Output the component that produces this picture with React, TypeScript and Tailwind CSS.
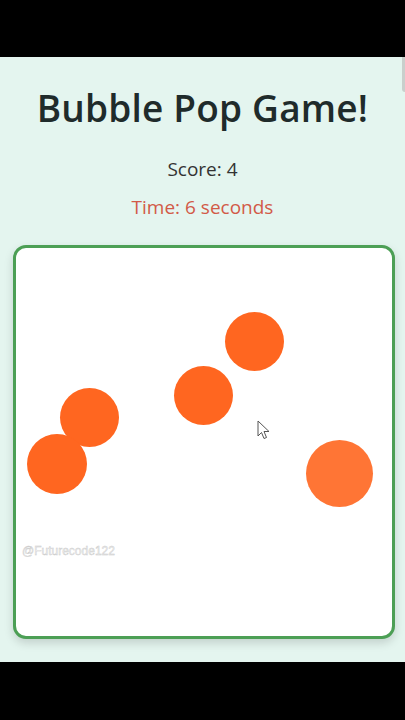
import React from 'react';

const bubbles = [
	{ id: 1, left: 209, top: 64, size: 59, color: 'bg-[#ff6620]' },
	{ id: 2, left: 158, top: 118, size: 59, color: 'bg-[#ff6620]' },
	{ id: 3, left: 44, top: 140, size: 59, color: 'bg-[#ff6620]' },
	{ id: 4, left: 11, top: 186, size: 60, color: 'bg-[#ff6620]' },
	{ id: 5, left: 290, top: 192, size: 67, color: 'bg-[#ff7535]' },
];

function Cursor() {
	return (
		<svg width="14" height="22" viewBox="0 0 14 22" className="absolute left-[241px] top-[172px]">
			<path
				d="M1 1 L1 16 L4.5 12.5 L7 18.5 L9.5 17.5 L7 11.5 L12 11.5 Z"
				fill="#fff"
				stroke="#555"
				strokeWidth="1"
				strokeLinejoin="round"
			/>
		</svg>
	);
}

export default function App() {
	return (
		<div className="w-[405px] h-[720px] flex flex-col bg-black font-['Open_Sans','Noto_Sans',sans-serif]">
			<div className="h-[57px] bg-black" />
			<div className="relative flex-1 bg-[#e4f5ef] flex flex-col items-center">
				{/* scrollbar stub */}
				<div className="absolute right-0 top-0 w-[3px] h-[35px] rounded-bl bg-[#c9cfcc]" />

				<h1 className="mt-[26px] text-[37px] leading-[50px] font-semibold text-[#1f2b2b] tracking-[0.2px]">
					Bubble Pop Game!
				</h1>
				<p className="mt-[23px] text-[19px] leading-[26px] text-[#333]">Score: 4</p>
				<p className="mt-[12px] text-[19px] leading-[26px] text-[#d25a47]">Time: 6 seconds</p>

				{/* Game Area */}
				<div className="relative mt-[25px] ml-[3px] w-[382px] h-[394px] bg-white border-[3px] border-[#4c9f55] rounded-[13px] shadow-[0_4px_10px_rgba(0,0,0,0.15)] overflow-hidden">
					{bubbles.map((b) => (
						<div
							key={b.id}
							className={`absolute rounded-full ${b.color}`}
							style={{ left: b.left, top: b.top, width: b.size, height: b.size }}
						/>
					))}
					<Cursor />
					<span className="absolute left-[6px] top-[294px] text-[12px] text-[#f2f2f2] [-webkit-text-stroke:0.4px_#c8c8c8] font-['Liberation_Sans',sans-serif]">
						@Futurecode122
					</span>
				</div>
			</div>
			<div className="h-[58px] bg-black" />
		</div>
	);
}
